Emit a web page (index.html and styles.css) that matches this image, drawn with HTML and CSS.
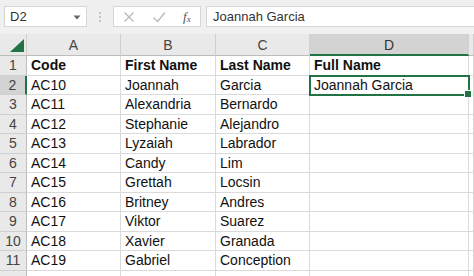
FILE: index.html
```html
<!DOCTYPE html>
<html>
<head>
<meta charset="utf-8">
<link rel="stylesheet" href="styles.css">
</head>
<body>
<div class="app">
  <div class="toolbar">
    <div class="namebox"><span>D2</span>
      <svg class="caret" width="8" height="5" viewBox="0 0 8 5"><path d="M0.5 0.5h7L4 4.5z" fill="#666"/></svg>
    </div>
    <div class="dots"><i></i><i></i><i></i></div>
    <div class="fbtns">
      <svg width="12" height="12" viewBox="0 0 12 12"><path d="M1.5 1.5l9 9M10.5 1.5l-9 9" stroke="#b8b8b8" stroke-width="1.3" fill="none"/></svg>
      <svg width="14" height="12" viewBox="0 0 14 12"><path d="M1.5 6.5l4 4 7.5-9" stroke="#b8b8b8" stroke-width="1.3" fill="none"/></svg>
      <span class="fx">f<sub>x</sub></span>
    </div>
    <div class="formula">Joannah Garcia</div>
  </div>
  <div class="sheet">
    <div class="corner"><svg width="14" height="13" viewBox="0 0 14 13"><path d="M14 0V13H0z" fill="#217346"/></svg></div>
    <div class="ch">A</div><div class="ch">B</div><div class="ch">C</div><div class="ch sel">D</div><div class="ch"></div>

    <div class="rh">1</div><div class="c b">Code</div><div class="c b">First Name</div><div class="c b">Last Name</div><div class="c b">Full Name</div><div class="c"></div>
    <div class="rh sel">2</div><div class="c">AC10</div><div class="c">Joannah</div><div class="c">Garcia</div><div class="c active">Joannah Garcia</div><div class="c"></div>
    <div class="rh">3</div><div class="c">AC11</div><div class="c">Alexandria</div><div class="c">Bernardo</div><div class="c"></div><div class="c"></div>
    <div class="rh">4</div><div class="c">AC12</div><div class="c">Stephanie</div><div class="c">Alejandro</div><div class="c"></div><div class="c"></div>
    <div class="rh">5</div><div class="c">AC13</div><div class="c">Lyzaiah</div><div class="c">Labrador</div><div class="c"></div><div class="c"></div>
    <div class="rh">6</div><div class="c">AC14</div><div class="c">Candy</div><div class="c">Lim</div><div class="c"></div><div class="c"></div>
    <div class="rh">7</div><div class="c">AC15</div><div class="c">Grettah</div><div class="c">Locsin</div><div class="c"></div><div class="c"></div>
    <div class="rh">8</div><div class="c">AC16</div><div class="c">Britney</div><div class="c">Andres</div><div class="c"></div><div class="c"></div>
    <div class="rh">9</div><div class="c">AC17</div><div class="c">Viktor</div><div class="c">Suarez</div><div class="c"></div><div class="c"></div>
    <div class="rh">10</div><div class="c">AC18</div><div class="c">Xavier</div><div class="c">Granada</div><div class="c"></div><div class="c"></div>
    <div class="rh">11</div><div class="c">AC19</div><div class="c">Gabriel</div><div class="c">Conception</div><div class="c"></div><div class="c"></div>
    <div class="rh"></div><div class="c"></div><div class="c"></div><div class="c"></div><div class="c"></div><div class="c"></div>
  </div>
</div>
</body>
</html>
```
FILE: styles.css
```css
* { box-sizing: border-box; }
html, body { margin: 0; padding: 0; background: #fff; }
.app { width: 474px; height: 276px; overflow: hidden; font-family: "Liberation Sans", Arial, sans-serif; }
.toolbar {
  height: 34px; background: #f0f0f0; display: flex; align-items: flex-start;
  padding: 6px 0 0 4px;
}
.namebox {
  width: 83px; height: 21px; background: #fff; border: 1px solid #d6d6d6;
  display: flex; align-items: center; justify-content: space-between;
  padding: 0 5px 0 5px; font-size: 13px; color: #333;
}
.caret { margin-top: 1px; }
.dots { width: 26px; height: 21px; display: flex; flex-direction: column; align-items: center; justify-content: center; gap: 2px; }
.dots i { display: block; width: 2px; height: 2px; background: #c4c4c4; }
.fbtns {
  width: 88px; height: 21px; background: #fff; border: 1px solid #d6d6d6;
  display: flex; align-items: center; padding: 0 0 0 9px; gap: 17px;
}
.fx { font-family: "Liberation Serif", serif; font-style: italic; font-size: 13px; color: #555; line-height: 1; }
.fx sub { font-size: 9px; vertical-align: -1px; }
.formula {
  flex: 1; height: 21px; margin-left: 5px; background: #fff; border: 1px solid #d6d6d6; border-right: none;
  font-size: 13px; color: #333; padding: 0 0 0 6px; display: flex; align-items: center;
}
.sheet {
  display: grid;
  grid-template-columns: 27px 94px 95px 94px 159px 5px;
  grid-template-rows: 22px;
  grid-auto-rows: 19.5px;
}
.corner { background: #e9e9e9; border-right: 1px solid #cfcfcf; border-bottom: 1px solid #bdbdbd; display: flex; align-items: flex-end; justify-content: flex-end; padding: 0 2px 3px 0; }
.ch {
  background: #e9e9e9; border-right: 1px solid #cfcfcf; border-bottom: 1px solid #bdbdbd;
  font-size: 14px; color: #444; display: flex; align-items: center; justify-content: center; padding-top: 1px;
}
.ch.sel { background: #d3d3d3; border-bottom: 2px solid #217346; color: #333; }
.rh {
  background: #e9e9e9; border-right: 1px solid #bdbdbd; border-bottom: 1px solid #cfcfcf;
  font-size: 14px; color: #444; display: flex; align-items: center; justify-content: center;
}
.rh.sel { background: #d3d3d3; border-right: 2px solid #217346; }
.c {
  border-right: 1px solid #dadada; border-bottom: 1px solid #dadada;
  font-size: 14px; color: #111; padding: 0 0 0 4px; display: flex; align-items: center; white-space: nowrap;
}
.c.b { font-weight: bold; }
.c.active { position: relative; outline: 2px solid #217346; outline-offset: -1px; padding-left: 4px; }
.c.active::after {
  content: ""; position: absolute; right: -4px; bottom: -4px; width: 6px; height: 6px;
  background: #217346; border: 1px solid #fff;
}
```
